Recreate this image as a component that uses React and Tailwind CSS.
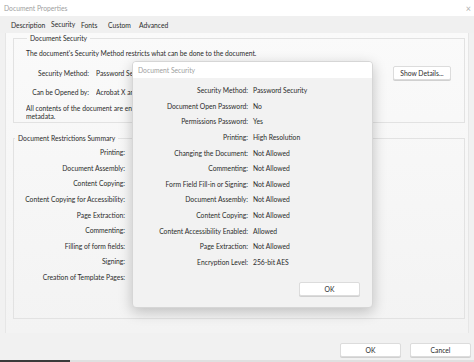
import React from 'react';

const restrictions = [
  'Printing:',
  'Document Assembly:',
  'Content Copying:',
  'Content Copying for Accessibility:',
  'Page Extraction:',
  'Commenting:',
  'Filling of form fields:',
  'Signing:',
  'Creation of Template Pages:',
];

const details = [
  ['Security Method:', 'Password Security'],
  ['Document Open Password:', 'No'],
  ['Permissions Password:', 'Yes'],
  ['Printing:', 'High Resolution'],
  ['Changing the Document:', 'Not Allowed'],
  ['Commenting:', 'Not Allowed'],
  ['Form Field Fill-in or Signing:', 'Not Allowed'],
  ['Document Assembly:', 'Not Allowed'],
  ['Content Copying:', 'Not Allowed'],
  ['Content Accessibility Enabled:', 'Allowed'],
  ['Page Extraction:', 'Not Allowed'],
  ['Encryption Level:', '256-bit AES'],
];

function Button({ children, className = '' }) {
  return (
    <div className={`h-[14px] flex items-center justify-center bg-white border border-[#dcdcdc] rounded-[2px] shadow-[0_1px_0_#d0d0d0] ${className}`}>
      {children}
    </div>
  );
}

export default function App() {
  const tabs = [
    ['Description', 'w-[40px]'],
    ['Security', 'w-[30px] -mt-[2px]'],
    ['Fonts', 'w-[27px]'],
    ['Custom', 'w-[31px]'],
    ['Advanced', 'w-[40px]'],
  ];

  return (
    <div className="w-[474px] h-[362px] relative overflow-hidden bg-[#f1f1f1] text-[6.75px] leading-[9px] text-[#2b2b2b] font-['Lato',sans-serif]">
      {/* title bar */}
      <div className="h-[16px] bg-white flex items-center justify-between pl-[4px] pr-[3px]">
        <span className="text-[#a0a0a0]">Document Properties</span>
        <span className="text-[#b0b0b0] text-[9px]">×</span>
      </div>

      {/* tabs */}
      <div className="h-[17px] bg-[#f0f0f0] flex items-center pl-[11px] pt-[1px]">
        {tabs.map(([t, cls]) => (
          <div key={t} className={cls}>
            {t}
          </div>
        ))}
      </div>

      {/* main panel */}
      <div className="mx-[5px] h-[300px] border-r border-l border-[#e6e6e6] px-[7px] pt-[1px] bg-gradient-to-b from-[#fafafa] to-[#f3f3f3]">
        <fieldset className="border border-[#e2e2e2] h-[89px] px-[12px] mr-[-4px]">
          <legend className="px-[3px] ml-[1px]">Document Security</legend>
          <div className="mt-[6px]">The document's Security Method restricts what can be done to the document.</div>
          <div className="flex items-center mt-[8px]">
            <div className="w-[63px] text-right">Security Method:</div>
            <div className="ml-[7px] flex-1">
              <div className="w-[38px] overflow-hidden whitespace-nowrap">Password Security</div>
            </div>
            <Button className="w-[58px] mr-[1px]">Show Details...</Button>
          </div>
          <div className="flex mt-[8px]">
            <div className="w-[63px] text-right">Can be Opened by:</div>
            <div className="ml-[7px] w-[38px] overflow-hidden whitespace-nowrap">Acrobat X and later</div>
          </div>
          <div className="mt-[8px] leading-[7.5px] w-[107px] overflow-hidden whitespace-nowrap">
            All contents of the document are encrypted
            <br />
            metadata.
          </div>
        </fieldset>

        <fieldset className="border border-[#e2e2e2] h-[185px] mt-[11px] mr-[-4px]">
          <legend className="px-[3px] ml-[1px]">Document Restrictions Summary</legend>
          <div className="mt-[2px] flex flex-col">
            {restrictions.map((k) => (
              <div key={k} className="flex h-[15.6px] items-center">
                <div className="w-[111px] text-right">{k}</div>
              </div>
            ))}
          </div>
        </fieldset>
      </div>

      {/* bottom buttons */}
      <div className="flex justify-end gap-[9px] pr-[3px] mt-[10px]">
        <Button className="w-[61px]">OK</Button>
        <Button className="w-[61px]">Cancel</Button>
      </div>

      {/* taskbar edge */}
      <div className="absolute left-0 right-0 bottom-0 h-[2px] bg-[#e0e0e0] flex">
        <div className="w-[70px] bg-[#3a3a3a]" />
      </div>

      {/* security details dialog */}
      <div className="absolute left-[132px] top-[61px] w-[241px] h-[247px] rounded-[4px] overflow-hidden border border-[#d6d6d6] bg-[#f2f2f2] shadow-[0_4px_14px_rgba(0,0,0,0.22)] flex flex-col">
        <div className="h-[16px] bg-white flex items-center pl-[5px] text-[#a0a0a0]">Document Security</div>
        <div className="flex flex-col pt-[5px]">
          {details.map(([k, v]) => (
            <div key={k} className="flex h-[15.6px] items-center">
              <div className="w-[115px] text-right">{k}</div>
              <div className="ml-[5px]">{v}</div>
            </div>
          ))}
        </div>
        <div className="flex justify-end pr-[12px] mt-[12px]">
          <Button className="w-[61px]">OK</Button>
        </div>
      </div>
    </div>
  );
}
